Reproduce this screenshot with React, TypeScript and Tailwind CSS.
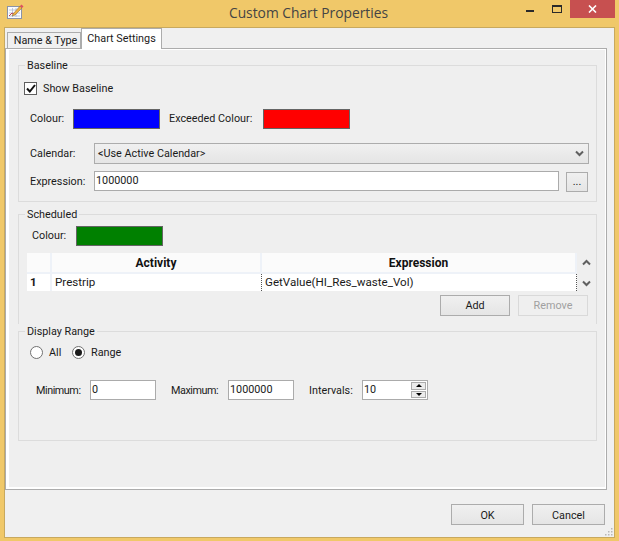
import React from "react";

const font = "font-['Roboto','Liberation_Sans',sans-serif] text-[10.8px] leading-[16px] text-[#1a1a1a]";

function Legend({ children, offset }: { children: React.ReactNode; offset: string }) {
  return <legend className={`${offset} px-[2px] h-[15px] leading-[15px] text-[#1a1a1a]`}>{children}</legend>;
}

function Swatch({ color }: { color: string }) {
  return <div className={`w-[87px] h-[20px] border border-[#646464] ${color}`} />;
}

function Btn({ children, w, disabled }: { children: React.ReactNode; w: string; disabled?: boolean }) {
  return (
    <div
      className={`${w} flex items-center justify-center border ${
        disabled
          ? "border-[#d9d9d9] text-[#a0a0a0] bg-[#efefef]"
          : "border-[#acacac] bg-gradient-to-b from-[#f0f0f0] to-[#e5e5e5]"
      }`}
    >
      {children}
    </div>
  );
}

function Field({ value, w }: { value: string; w: string }) {
  return <div className={`${w} h-[20px] bg-white border border-[#ababab] pl-[1px] leading-[17px]`}>{value}</div>;
}

function Radio({ checked }: { checked?: boolean }) {
  return (
    <svg width="13" height="13" viewBox="0 0 13 13">
      <circle cx="6.5" cy="6.5" r="6" fill="#fff" stroke="#707070" />
      {checked && <circle cx="6.5" cy="6.5" r="3.500" fill="#1a1a1a" />}
    </svg>
  );
}

function Chevron({ up }: { up?: boolean }) {
  return (
    <svg width="9" height="7" viewBox="0 0 9 7">
      <path d={up ? "M1 5.500 4.500 2 8 5.500" : "M1 1.500 4.500 5 8 1.500"} fill="none" stroke="#606060" strokeWidth="2" />
    </svg>
  );
}

function AppIcon() {
  return (
    <svg width="17" height="16" viewBox="0 0 17 16">
      <rect x="0.5" y="3.500" width="14" height="12" fill="#fbfcff" stroke="#8a93a8" />
      <path d="M2 7h11M2 10h11M2 13h11M5.500 5v9M9 5v9" stroke="#a8b4cc" strokeWidth="0.700" />
      <path d="M2 13 5 10l3 1.500L11 7" fill="none" stroke="#c04050" strokeWidth="1" />
      <path d="M6 11 13 3l2 2-7 7-3 1z" fill="#eeb040" stroke="#8a6a30" strokeWidth="0.500" />
      <path d="M13 3l1.500-1.500 2 2L15 5z" fill="#e05060" />
    </svg>
  );
}

export default function App() {
  return (
    <div className={`w-[619px] h-[541px] bg-[#f0c869] flex flex-col overflow-hidden ${font}`}>
      {/* Title bar */}
      <div className="h-[27px] shrink-0 flex items-start pl-[7px]">
        <div className="mt-[3px]">
          <AppIcon />
        </div>
        <div className="flex-1 pl-[67px] text-center text-[#444] font-['Open_Sans',sans-serif] text-[13.8px] leading-[26px]">
          Custom Chart Properties
        </div>
        <div className="flex items-start pr-[4px]">
          <div className="w-[8px] h-[2px] bg-[#2a2a2a] mt-[10px]" />
          <div className="w-[10px] h-[8px] ml-[18px] mt-[5px] border border-t-2 border-[#2a2a2a]" />
          <div className="w-[45px] h-[18px] ml-[8px] bg-[#c75050] flex items-center justify-center">
            <svg width="9" height="8" viewBox="0 0 9 8">
              <path d="M1 .5 8 7.500M8 .5 1 7.500" stroke="#fff" strokeWidth="1.600" />
            </svg>
          </div>
        </div>
      </div>

      {/* Client */}
      <div className="mx-[4px] mb-[3px] flex-1 flex flex-col border border-[#c8a95e] bg-[#f0f0f0] min-h-0">
        {/* Tab strip */}
        <div className="h-[20px] shrink-0 flex items-end pl-[2px] relative z-10 whitespace-nowrap">
          <div className="w-[74px] h-[16px] bg-[#f0f0f0] border border-b-0 border-[#acacac] flex items-start justify-center leading-[15px] pl-[3px]">
            Name &amp; Type
          </div>
          <div className="w-[81px] h-[21px] -mb-[1px] bg-white border border-b-0 border-[#acacac] flex items-start justify-center leading-[19px]">
            Chart Settings
          </div>
        </div>

        {/* Tab panel */}
        <div className="mr-[7px] h-[442px] shrink-0 border border-[#acacac] bg-white pl-[3px] pb-[2px] pt-px pr-px">
          <div className="h-full bg-[#efefef] pl-[9px] pr-[8px] pt-[8px] flex flex-col">
            {/* Baseline */}
            <fieldset className="h-[144px] shrink-0 border border-[#dcdcdc] pl-[5px] pr-[7px]">
              <Legend offset="ml-[1px]">Baseline</Legend>
              <div className="flex items-center h-[13px] mt-[9px]">
                <div className="w-[13px] h-[13px] border border-[#5f5f5f] bg-white flex items-center justify-center">
                  <svg width="10" height="9" viewBox="0 0 10 9">
                    <path d="M1 4.500 3.800 7.500 9 1" fill="none" stroke="#111" strokeWidth="2" />
                  </svg>
                </div>
                <span className="ml-[6px]">Show Baseline</span>
              </div>
              <div className="flex items-center mt-[14px] pl-[6px]">
                <span className="w-[43px]">Colour:</span>
                <Swatch color="bg-[#0000ff]" />
                <span className="ml-[9px] w-[94px]">Exceeded Colour:</span>
                <Swatch color="bg-[#ff0000]" />
              </div>
              <div className="flex items-center mt-[14px] pl-[6px]">
                <span className="w-[64px]">Calendar:</span>
                <div className="flex-1 h-[21px] border border-[#acacac] bg-gradient-to-b from-[#f0f0f0] to-[#e5e5e5] flex items-center justify-between pl-[3px] pr-[4px]">
                  <span>&lt;Use Active Calendar&gt;</span>
                  <Chevron />
                </div>
              </div>
              <div className="flex items-start mt-[7px] pl-[6px]">
                <span className="w-[64px] leading-[21px]">Expression:</span>
                <Field value="1000000" w="w-[465px]" />
                <div className="ml-[7px] mt-px">
                  <Btn w="w-[22px] h-[20px]">...</Btn>
                </div>
              </div>
            </fieldset>

            {/* Scheduled */}
            <fieldset className="h-[117px] mt-[5px] shrink-0 border border-[#dcdcdc] border-b-0 pl-[8px] pr-[5px]">
              <Legend offset="-ml-[2px]">Scheduled</Legend>
              <div className="flex items-center pl-[5px] mt-[4px]">
                <span className="w-[44px]">Colour:</span>
                <Swatch color="bg-[#008000]" />
              </div>
              <div className="flex mt-[7px]">
                <div className="w-[550px] bg-white">
                  <div className="grid grid-cols-[25px_210px_1fr] h-[21px] bg-[#fbfbfb] border-b-2 border-[#eef2f8] font-bold items-center text-center text-[#111] text-[12px]">
                    <div className="h-full border-r-2 border-[#eef2f8]" />
                    <div className="h-full border-r-2 border-[#eef2f8] leading-[20px]">Activity</div>
                    <div className="h-full border-r-2 border-[#eef2f8] leading-[20px]">Expression</div>
                  </div>
                  <div className="grid grid-cols-[25px_210px_1fr] h-[17px] items-center leading-[17px] text-[11.6px]">
                    <div className="h-full border-r-2 border-[#eef2f8] pl-[3px] font-bold">1</div>
                    <div className="h-full border-r border-dotted border-[#555] pl-[3px]">Prestrip</div>
                    <div className="h-full border-r border-dotted border-[#555] pl-[3px]">GetValue(HI_Res_waste_Vol)</div>
                  </div>
                </div>
                <div className="ml-[5px] flex flex-col items-center pt-[6px] w-[9px] gap-[14px]">
                  <Chevron up />
                  <Chevron />
                </div>
              </div>
              <div className="flex justify-end gap-[8px] mt-[4px] pr-[3px]">
                <Btn w="w-[70px] h-[21px]">Add</Btn>
                <Btn w="w-[70px] h-[21px]" disabled>
                  Remove
                </Btn>
              </div>
            </fieldset>

            {/* Display Range */}
            <fieldset className="h-[117px] shrink-0 border border-[#dcdcdc] pl-[11px] relative bg-[#efefef]">
              <Legend offset="-ml-[5px]">Display Range</Legend>
              <div className="flex items-center h-[13px] mt-[7px]">
                <Radio />
                <span className="ml-[6px] w-[23px] pt-px">All</span>
                <Radio checked />
                <span className="ml-[6px] pt-px">Range</span>
              </div>
              <div className="flex items-center mt-[21px] pl-[6px]">
                <span className="w-[54px] pt-px tracking-[-0.45px]">Minimum:</span>
                <Field value="0" w="w-[66px]" />
                <span className="ml-[15px] w-[57px] pt-px tracking-[-0.45px]">Maximum:</span>
                <Field value="1000000" w="w-[66px]" />
                <span className="ml-[15px] w-[53px] pt-px">Intervals:</span>
                <div className="w-[66px] h-[20px] bg-white border border-[#ababab] pl-[1px] leading-[17px] flex justify-between">
                  <span>10</span>
                  <div className="w-[15px] mr-[1px] my-px flex flex-col gap-px">
                    <div className="flex-1 bg-[#ececec] border border-[#acacac] flex items-center justify-center">
                      <div className="w-0 h-0 border-x-[3px] border-x-transparent border-b-[3px] border-b-black" />
                    </div>
                    <div className="flex-1 bg-[#ececec] border border-[#acacac] flex items-center justify-center">
                      <div className="w-0 h-0 border-x-[3px] border-x-transparent border-t-[3px] border-t-black" />
                    </div>
                  </div>
                </div>
              </div>
            </fieldset>
          </div>
        </div>

        {/* Footer */}
        <div className="flex-1 flex justify-end items-start gap-[8px] pt-[14px] pr-[9px] relative">
          <Btn w="w-[73px] h-[21px] pt-[2px]">OK</Btn>
          <Btn w="w-[73px] h-[21px] pt-[2px]">Cancel</Btn>
          <svg className="absolute right-[1px] bottom-[1px]" width="9" height="9" viewBox="0 0 9 9">
            <path d="M7 1h1.500v1.500H7zM7 4h1.500v1.500H7zM4 4h1.500v1.500H4zM7 7h1.500v1.500H7zM4 7h1.500v1.500H4zM1 7h1.500v1.500H1z" fill="#b8b8b8" />
          </svg>
        </div>
      </div>
    </div>
  );
}
